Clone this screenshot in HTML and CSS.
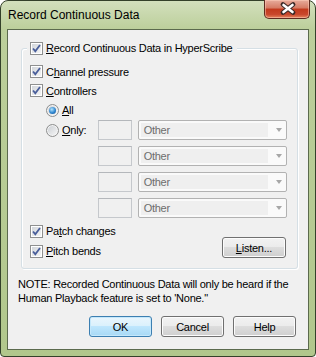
FILE: index.html
```html
<!DOCTYPE html>
<html lang="en">
<head>
    <meta charset="UTF-8">
    <meta name="viewport" content="width=device-width, initial-scale=1.0">
    <title>Record Continuous Data</title>
    <link rel="stylesheet" href="styles.css">
</head>
<body>
    <div class="window">
        <!-- Заголовок окна -->
        <div class="titlebar">
            <span class="title">Record Continuous Data</span>
            <span class="close">
                <svg width="46" height="19" viewBox="0 0 46 19">
                    <path d="M19 5.5 L29 13.5 M29 5.5 L19 13.5" stroke="#3b2a28" stroke-width="4.8" stroke-linecap="round"/>
                    <path d="M19.5 6 L28.5 13 M28.5 6 L19.5 13" stroke="#ffffff" stroke-width="2.6" stroke-linecap="round"/>
                </svg>
            </span>
        </div>

        <div class="client">
            <div class="group">
                <div class="legend">
                    <span class="check"><svg width="11" height="11" viewBox="0 0 11 11"><path d="M2 5.5 L4.3 8.2 L9 2" stroke="#4a5f9b" stroke-width="1.8" fill="none"/></svg></span>
                    <span><u>R</u>ecord Continuous Data in HyperScribe</span>
                </div>
                <div class="row first">
                    <span class="check"><svg width="11" height="11" viewBox="0 0 11 11"><path d="M2 5.5 L4.3 8.2 L9 2" stroke="#4a5f9b" stroke-width="1.8" fill="none"/></svg></span>
                    <span>C<u>h</u>annel pressure</span>
                </div>
                <div class="row">
                    <span class="check"><svg width="11" height="11" viewBox="0 0 11 11"><path d="M2 5.5 L4.3 8.2 L9 2" stroke="#4a5f9b" stroke-width="1.8" fill="none"/></svg></span>
                    <span><u>C</u>ontrollers</span>
                </div>
                <div class="row sub all">
                    <span class="radio on"></span>
                    <span><u>A</u>ll</span>
                </div>
                <div class="row sub ctrl">
                    <span class="label"><span class="radio"></span><span><u>O</u>nly:</span></span>
                    <span class="textbox"></span>
                    <span class="combo"><span class="field">Other</span><span class="arrow"></span></span>
                </div>
                <div class="row sub ctrl">
                    <span class="label"></span>
                    <span class="textbox"></span>
                    <span class="combo"><span class="field">Other</span><span class="arrow"></span></span>
                </div>
                <div class="row sub ctrl">
                    <span class="label"></span>
                    <span class="textbox"></span>
                    <span class="combo"><span class="field">Other</span><span class="arrow"></span></span>
                </div>
                <div class="row sub ctrl">
                    <span class="label"></span>
                    <span class="textbox"></span>
                    <span class="combo"><span class="field">Other</span><span class="arrow"></span></span>
                </div>
                <div class="bottom">
                    <div>
                        <div class="row tall">
                            <span class="check"><svg width="11" height="11" viewBox="0 0 11 11"><path d="M2 5.5 L4.3 8.2 L9 2" stroke="#4a5f9b" stroke-width="1.8" fill="none"/></svg></span>
                            <span>Pa<u>t</u>ch changes</span>
                        </div>
                        <div class="row tall">
                            <span class="check"><svg width="11" height="11" viewBox="0 0 11 11"><path d="M2 5.5 L4.3 8.2 L9 2" stroke="#4a5f9b" stroke-width="1.8" fill="none"/></svg></span>
                            <span><u>P</u>itch bends</span>
                        </div>
                    </div>
                    <span class="btn listen"><u>L</u>isten...</span>
                </div>
            </div>

            <p class="note">NOTE: Recorded Continuous Data will only be heard if the Human Playback feature is set to 'None."</p>

            <div class="buttons">
                <span class="btn default">OK</span>
                <span class="btn">Cancel</span>
                <span class="btn">Help</span>
            </div>
        </div>
    </div>
</body>
</html>
```

FILE: styles.css
```css
* {
    margin: 0px;
    padding: 0px;
    box-sizing: border-box;
}

body {
    background-color: #ffffff;
    font-family: "Liberation Sans", Arial, sans-serif;
    font-size: 11px;
    letter-spacing: -0.25px;
    color: #000000;
}

/* Рамка окна */
.window {
    width: 316px;
    height: 357px;
    border: 1px solid #34412a;
    border-radius: 8px 8px 4px 4px;
    padding: 0px 6px 6px 6px;
    background: linear-gradient(#d3e0bd, #bccf9b 28px, #b1c78c);
}

.titlebar {
    height: 28px;
    display: flex;
    justify-content: space-between;
    align-items: flex-start;
}

.title {
    font-size: 12px;
    letter-spacing: 0px;
    line-height: 15px;
    padding: 7px 0px 0px 1px;
    color: #000000;
}

.close {
    width: 46px;
    height: 19px;
    margin: -1px -1px 0px 0px;
    border: 1px solid #5e2b20;
    border-top: none;
    border-radius: 0px 0px 5px 5px;
    background: linear-gradient(#e7ac9c, #d57a63 45%, #c2391c 50%, #c9472c 80%, #e5865f);
    box-shadow: inset 0px 0px 0px 1px rgba(255, 210, 190, 0.5);
}

.close svg {
    display: block;
    margin: -1px 0px 0px -1px;
}

/* Клиентская область */
.client {
    height: 321px;
    border: 1px solid #5b6a4d;
    background-color: #f0f0f0;
    padding-top: 18px;
}

.group {
    margin-left: 13px;
    width: 277px;
    height: 221px;
    border: 1px solid #d5dfe5;
    border-radius: 3px;
    box-shadow: inset 1px 1px 0px #ffffff, 1px 1px 0px #ffffff;
    padding: 0px 10px 0px 8px;
}

.legend {
    display: flex;
    align-items: center;
    gap: 3px;
    width: fit-content;
    height: 16px;
    margin: -9px 0px 0px -3px;
    padding: 0px 5px 0px 3px;
    background-color: #f0f0f0;
}

.row {
    display: flex;
    align-items: center;
    gap: 3px;
    height: 19px;
}

.row.first {
    margin-top: 6px;
}

.row.sub {
    padding-left: 16px;
}

.row.all {
    height: 20px;
}

.row.ctrl {
    height: 20px;
    gap: 0px;
}

.row.ctrl + .row.ctrl {
    margin-top: 6px;
}

.row.tall {
    height: 20px;
}

/* Флажок */
.check {
    width: 13px;
    height: 13px;
    border: 1px solid #8e8f8f;
    background: linear-gradient(135deg, #cfd3d8, #f7f7f7);
    box-shadow: inset 0px 0px 0px 1px #ffffff;
    display: flex;
    align-items: center;
    justify-content: center;
}

.check svg {
    display: block;
}

/* Переключатель */
.radio {
    width: 13px;
    height: 13px;
    border: 1px solid #8e8f8f;
    border-radius: 50%;
    background: linear-gradient(135deg, #c8ccd1, #f8f8f8);
    box-shadow: inset 0px 0px 0px 1px #f4f4f4;
    display: flex;
    align-items: center;
    justify-content: center;
}

.radio.on::after {
    content: "";
    width: 7px;
    height: 7px;
    border-radius: 50%;
    background: radial-gradient(circle at 40% 35%, #b4e4fb, #2f86d0 55%, #114d8e);
}

.label {
    width: 52px;
    display: flex;
    align-items: center;
    gap: 3px;
}

.textbox {
    width: 34px;
    height: 20px;
    border: 1px solid #c5c8cc;
    border-top-color: #b4b7bb;
    background-color: #f0f0f0;
}

.combo {
    width: 150px;
    height: 20px;
    margin-left: 6px;
    border: 1px solid #b2b2b2;
    border-radius: 2px;
    background-color: #fafafa;
    padding: 2px;
    display: flex;
    align-items: center;
}

.field {
    width: 127px;
    height: 14px;
    line-height: 14px;
    background-color: #efefef;
    color: #6d6d6d;
    padding-left: 3px;
}

.arrow {
    margin-left: 8px;
    width: 0px;
    height: 0px;
    border-left: 3.5px solid transparent;
    border-right: 3.5px solid transparent;
    border-top: 4px solid #a7a7a7;
}

.bottom {
    margin-top: 3px;
    display: flex;
    justify-content: space-between;
    align-items: flex-end;
}

/* Кнопки */
.btn {
    width: 63px;
    height: 21px;
    border: 1px solid #707070;
    border-radius: 3px;
    background: linear-gradient(#f2f2f2, #ebebeb 50%, #dddddd 50%, #cfcfcf);
    box-shadow: inset 0px 0px 0px 1px #fcfcfc;
    display: flex;
    align-items: center;
    justify-content: center;
}

.btn.listen {
    width: 64px;
    margin: 0px 1px 3px 0px;
}

.btn.default {
    border-color: #3c7fb1;
    background: linear-gradient(#eaf6fd, #d9f0fc 50%, #bee6fd 50%, #a7d9f5);
    box-shadow: inset 0px 0px 0px 1px #c5e8fb;
}

.note {
    margin-top: 8px;
    padding-left: 10px;
    line-height: 14px;
}

.buttons {
    margin-top: 11px;
    display: flex;
    justify-content: flex-end;
    gap: 9px;
    padding-right: 12px;
}
```
